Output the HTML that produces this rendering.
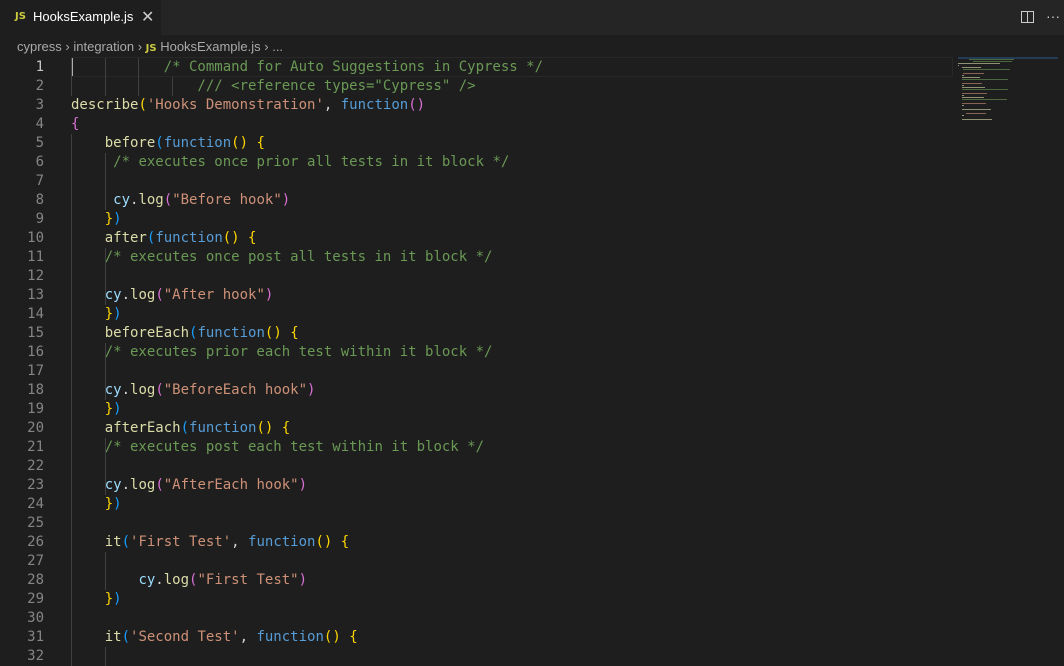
<!DOCTYPE html>
<html><head><meta charset="utf-8"><style>
*{margin:0;padding:0;box-sizing:border-box}
body{width:1064px;height:656px;background:#1e1e1e;overflow:hidden;position:relative;font-family:"Liberation Sans",sans-serif}
.tabbar{position:absolute;left:0;top:0;width:1064px;height:35px;background:#252526}
.tab{position:absolute;left:0;top:0;width:161px;height:35px;background:#1e1e1e;color:#fff;font-size:13px}
.js{color:#cbcb41;font-weight:bold;font-size:10px;font-family:"DejaVu Sans",sans-serif}
.bc{position:absolute;left:17px;top:36px;height:22px;line-height:22px;font-size:13px;color:#a9a9a9}
.code{position:absolute;left:0;top:58px;font-family:"DejaVu Sans Mono",monospace;font-size:14px}
.ln{position:absolute;left:0;width:44px;text-align:right;color:#858585;height:19px;line-height:19px}
.l{position:absolute;left:71px;white-space:pre;height:19px;line-height:19px;color:#d4d4d4}
.g{position:absolute;width:1px;background:#404040}
.c{color:#6a9955}.s{color:#ce9178}.k{color:#569cd6}.f{color:#dcdcaa}.v{color:#9cdcfe}
.y{color:#ffd700}.p{color:#da70d6}.b{color:#179fff}
.mm{position:absolute;height:1px;opacity:.6}
</style></head><body>
<div class="tabbar">
<div class="tab"><span class="js" style="position:absolute;left:15px;top:11px">JS</span><span style="position:absolute;left:33px;top:9px">HooksExample.js</span><span style="position:absolute;left:141px;top:7px;font-size:16px;color:#ccc">✕</span></div>
<div style="position:absolute;left:1021px;top:11px;width:13px;height:12px;border:1px solid #ccc"></div>
<div style="position:absolute;left:1027px;top:11px;width:1px;height:12px;background:#ccc"></div>
<div style="position:absolute;left:1046px;top:8px;color:#ccc;font-size:14px">···</div>
</div>
<div class="bc">cypress <span>›</span> integration <span>›</span> <span class="js">JS</span> HooksExample.js <span>›</span> ...</div>
<div style="position:absolute;left:71px;top:57px;width:882px;height:20px;border:1px solid #282828"></div>
<div style="position:absolute;left:71px;top:58px;width:2px;height:18px;background:#aeafad"></div>
<div class="code" id="c"></div>
<div style="position:absolute;left:958px;top:57px;width:100px;height:2px;background:#264f78;opacity:.6"></div>
<script>
var L=[
'<span class="c">           /* Command for Auto Suggestions in Cypress */</span>',
'<span class="c">               /// &lt;reference types="Cypress" /&gt;</span>',
'<span class="f">describe</span><span class="y">(</span><span class="s">\'Hooks Demonstration\'</span>, <span class="k">function</span><span class="p">()</span>',
'<span class="p">{</span>',
'    <span class="f">before</span><span class="b">(</span><span class="k">function</span><span class="y">()</span> <span class="y">{</span>',
'     <span class="c">/* executes once prior all tests in it block */</span>',
'',
'     <span class="v">cy</span>.<span class="f">log</span><span class="p">(</span><span class="s">"Before hook"</span><span class="p">)</span>',
'    <span class="y">}</span><span class="b">)</span>',
'    <span class="f">after</span><span class="b">(</span><span class="k">function</span><span class="y">()</span> <span class="y">{</span>',
'    <span class="c">/* executes once post all tests in it block */</span>',
'',
'    <span class="v">cy</span>.<span class="f">log</span><span class="p">(</span><span class="s">"After hook"</span><span class="p">)</span>',
'    <span class="y">}</span><span class="b">)</span>',
'    <span class="f">beforeEach</span><span class="b">(</span><span class="k">function</span><span class="y">()</span> <span class="y">{</span>',
'    <span class="c">/* executes prior each test within it block */</span>',
'',
'    <span class="v">cy</span>.<span class="f">log</span><span class="p">(</span><span class="s">"BeforeEach hook"</span><span class="p">)</span>',
'    <span class="y">}</span><span class="b">)</span>',
'    <span class="f">afterEach</span><span class="b">(</span><span class="k">function</span><span class="y">()</span> <span class="y">{</span>',
'    <span class="c">/* executes post each test within it block */</span>',
'',
'    <span class="v">cy</span>.<span class="f">log</span><span class="p">(</span><span class="s">"AfterEach hook"</span><span class="p">)</span>',
'    <span class="y">}</span><span class="b">)</span>',
'',
'    <span class="f">it</span><span class="b">(</span><span class="s">\'First Test\'</span>, <span class="k">function</span><span class="y">()</span> <span class="y">{</span>',
'',
'        <span class="v">cy</span>.<span class="f">log</span><span class="p">(</span><span class="s">"First Test"</span><span class="p">)</span>',
'    <span class="y">}</span><span class="b">)</span>',
'',
'    <span class="f">it</span><span class="b">(</span><span class="s">\'Second Test\'</span>, <span class="k">function</span><span class="y">()</span> <span class="y">{</span>',
''];
var h='';
for(var i=0;i<L.length;i++){var t=i*19;
h+='<div class="ln" style="top:'+t+'px;'+(i==0?'color:#c6c6c6':'')+'">'+(i+1)+'</div><div class="l" style="top:'+t+'px">'+L[i]+'</div>';}
function g(x,a,b){h+='<div class="g" style="left:'+x+'px;top:'+((a-1)*19)+'px;height:'+((b-a+1)*19)+'px"></div>';}
g(71,1,2);g(105,1,2);g(138,1,2);g(172,2,2);
g(71,5,32);
[[6,8],[11,13],[16,18],[21,23],[27,28],[32,32]].forEach(function(r){g(105,r[0],r[1]);});
document.getElementById('c').innerHTML=h;
var m='';var cols=['#6a9955','#dcdcaa','#9cdcfe','#ce9178'];
for(var i=0;i<L.length;i++){var txt=L[i].replace(/<[^>]+>/g,'');var ind=txt.length-txt.replace(/^ +/,'').length;var len=txt.trim().length;if(!len)continue;
m+='<div class="mm" style="left:'+(958+ind)+'px;top:'+(59+i*2)+'px;width:'+len+'px;background:'+(txt.indexOf('/*')>=0||txt.indexOf('///')>=0?cols[0]:(txt.indexOf('cy')>=0?cols[3]:cols[1]))+'"></div>';}
document.body.insertAdjacentHTML('beforeend',m);
</script>
</body></html>
